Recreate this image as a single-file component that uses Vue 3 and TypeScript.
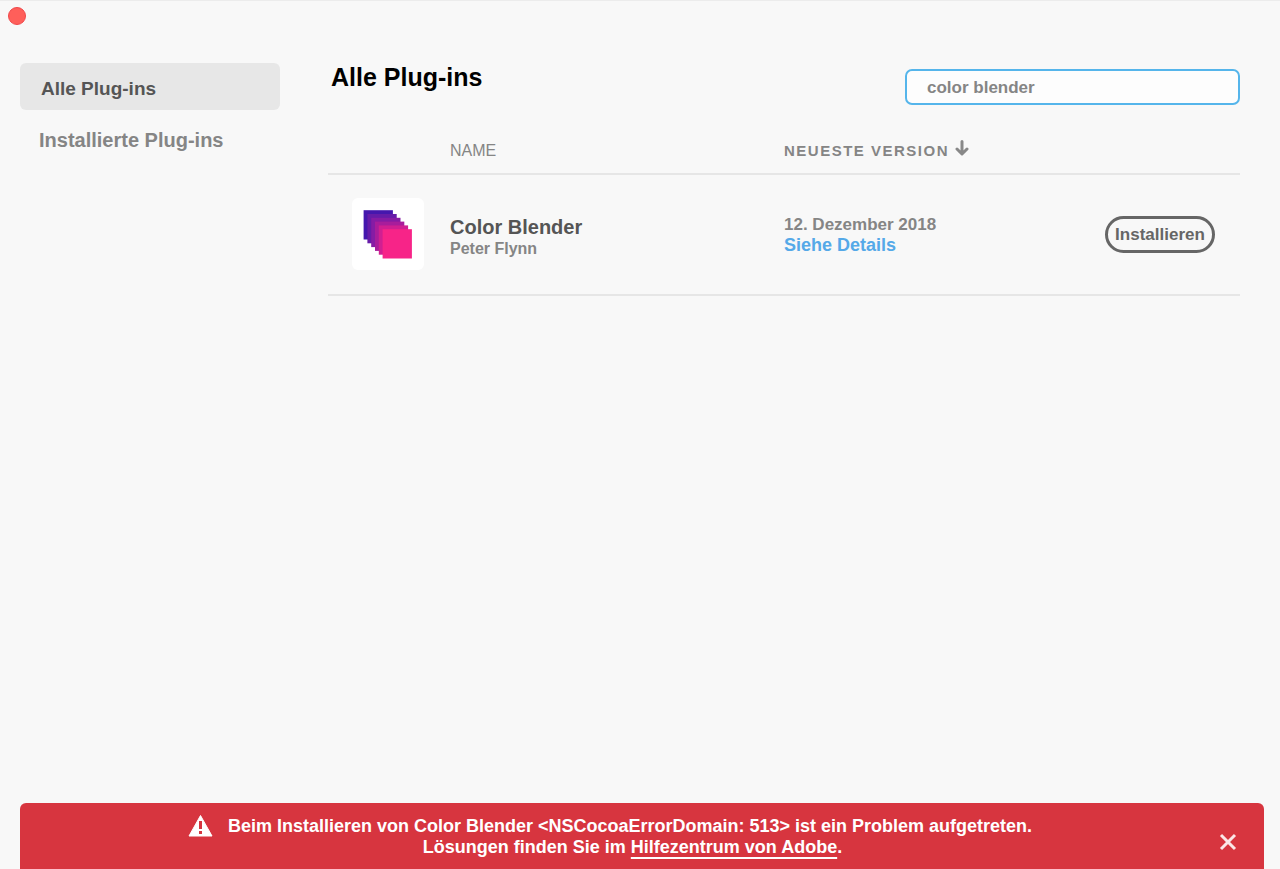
<script setup lang="ts">
import { ref } from 'vue'

interface Plugin {
  name: string
  author: string
  released: string
}

const query = ref('color blender')
const errorVisible = ref(true)
const plugins: Plugin[] = [
  { name: 'Color Blender', author: 'Peter Flynn', released: '12. Dezember 2018' },
]

const logoLayers = [
  { offset: 0, fill: '#4517ad' },
  { offset: 3.8, fill: '#661ca8' },
  { offset: 7.6, fill: '#861ca4' },
  { offset: 11.4, fill: '#a81d9b' },
  { offset: 15.2, fill: '#d01f92' },
  { offset: 19, fill: '#f72488' },
]
</script>

<template>
  <div class="window">
    <header class="titlebar">
      <button class="window-close" type="button" aria-label="Fenster schließen"></button>
    </header>

    <div class="content">
      <nav class="sidebar">
        <a class="nav-item active" href="#alle" aria-current="page">Alle Plug-ins</a>
        <a class="nav-item" href="#installiert">Installierte Plug-ins</a>
      </nav>

      <main class="main">
        <div class="toolbar">
          <h1>Alle Plug-ins</h1>
          <input v-model="query" class="search" type="text" aria-label="Plug-ins suchen" />
        </div>

        <table class="plugins">
          <colgroup>
            <col class="col-icon" />
            <col class="col-name" />
            <col />
            <col class="col-action" />
          </colgroup>
          <thead>
            <tr>
              <td></td>
              <th scope="col" class="head-name">NAME</th>
              <th scope="col" class="head-version" aria-sort="descending">
                <span class="sort">
                  NEUESTE VERSION
                  <svg width="14" height="17" viewBox="0 0 14 17" aria-hidden="true">
                    <path d="M7 1.5V13M2 9l5 5 5-5" fill="none" stroke="#888" stroke-width="3" stroke-linecap="round" stroke-linejoin="round" />
                  </svg>
                </span>
              </th>
              <td></td>
            </tr>
          </thead>
          <tbody>
            <tr v-for="plugin in plugins" :key="plugin.name">
              <td class="cell-icon">
                <svg class="logo" width="72" height="72" viewBox="0 0 72 72" aria-hidden="true">
                  <rect width="72" height="72" rx="6" fill="#fff" />
                  <rect v-for="layer in logoLayers" :key="layer.offset" :x="11.6 + layer.offset" :y="12.2 + layer.offset" width="29.3" height="29.3" :fill="layer.fill" />
                </svg>
              </td>
              <td class="cell-name">
                <div class="plugin-name">{{ plugin.name }}</div>
                <div class="plugin-author">{{ plugin.author }}</div>
              </td>
              <td>
                <div class="released">{{ plugin.released }}</div>
                <a class="details" href="#details">Siehe Details</a>
              </td>
              <td class="cell-action">
                <button class="install" type="button">Installieren</button>
              </td>
            </tr>
          </tbody>
        </table>
      </main>
    </div>

    <div v-if="errorVisible" class="banner" role="alert">
      <div class="message">
        <svg class="warning" width="25" height="23" viewBox="0 0 25 23" aria-hidden="true">
          <path d="M12.5 1.5 24 22H1z" fill="#fff" stroke="#fff" stroke-linejoin="round" />
          <path d="M12.5 7v8M12.5 17v3" stroke="#d7353f" stroke-width="3" />
        </svg>
        <p>
          Beim Installieren von Color Blender &lt;NSCocoaErrorDomain: 513&gt; ist ein Problem aufgetreten.
          <span class="hint">Lösungen finden Sie im <a href="#hilfe">Hilfezentrum von Adobe</a>.</span>
        </p>
      </div>
      <button class="dismiss" type="button" aria-label="Meldung schließen" @click="errorVisible = false">
        <svg width="18" height="18" viewBox="0 0 18 18" aria-hidden="true">
          <path d="M2 2l14 14M16 2 2 16" stroke="#fbe6e7" stroke-width="3" />
        </svg>
      </button>
    </div>
  </div>
</template>

<style>
body {
  margin: 0;
  background: #f8f8f8;
}
</style>

<style scoped>
.window {
  box-sizing: border-box;
  display: flex;
  flex-direction: column;
  min-height: 100vh;
  border-top: 1px solid #ececec;
  background: #f8f8f8;
  color: #858585;
  font-family: "Liberation Sans", Arial, sans-serif;
  font-weight: 700;
}

button {
  padding: 0;
  border: 0;
  background: none;
  font: inherit;
  cursor: pointer;
}

a {
  color: inherit;
  text-decoration: none;
}

.titlebar {
  display: flex;
  height: 48px;
  padding: 6px 8px 8px;
}

.window-close {
  width: 18px;
  height: 18px;
  border: 1px solid #f0484a;
  border-radius: 50%;
  background: #ff5f5a;
}

.content {
  display: flex;
  flex: 1;
  gap: 48px;
  padding: 0 40px 0 20px;
}

.sidebar {
  display: flex;
  flex: 0 0 260px;
  flex-direction: column;
  gap: 4px;
}

.nav-item {
  box-sizing: border-box;
  height: 47px;
  padding: 4px 19px 0;
  border-radius: 6px;
  font-size: 20px;
  line-height: 44px;
}

.nav-item.active {
  padding-left: 21px;
  background: #e7e7e7;
  color: #555;
  font-size: 19px;
}

.main {
  flex: 1;
  min-width: 0;
}

.toolbar {
  display: flex;
  align-items: flex-start;
  justify-content: space-between;
  padding-left: 3px;
}

h1 {
  margin: 0;
  color: #000;
  font-size: 25px;
  line-height: 28px;
}

.search {
  box-sizing: border-box;
  width: 335px;
  height: 36px;
  margin-top: 6px;
  padding: 1px 20px 0;
  border: 2px solid #55b5eb;
  border-radius: 7px;
  outline: 0;
  background: #fdfdfd;
  color: #858585;
  font: inherit;
  font-size: 17px;
}

.plugins {
  width: 100%;
  margin-top: 23px;
  border-collapse: separate;
  border-spacing: 0;
  table-layout: fixed;
}

.col-icon {
  width: 122px;
}

.col-name {
  width: 334px;
}

.col-action {
  width: 135px;
}

td,
th {
  padding: 0;
  border-bottom: 2px solid #e6e6e6;
  text-align: left;
}

thead th,
thead td {
  height: 45px;
}

.head-name {
  font-size: 16px;
  font-weight: 400;
}

.head-version {
  font-size: 15px;
  letter-spacing: 0.1em;
}

.sort {
  display: flex;
  align-items: center;
  gap: 6px;
}

.sort svg {
  margin-bottom: 4px;
}

tbody td {
  height: 119px;
}

tbody .cell-icon {
  height: 118px;
  padding-bottom: 1px;
}

tbody .cell-name {
  height: 115px;
  padding-top: 4px;
}

.logo {
  display: block;
  margin-left: 24px;
}

.plugin-name {
  color: #555;
  font-size: 20px;
  line-height: 24px;
}

.plugin-author {
  font-size: 16px;
  line-height: 20px;
}

.released {
  font-size: 17px;
  line-height: 20px;
}

.details {
  display: block;
  color: #55a9e8;
  font-size: 18px;
  line-height: 20px;
}

.install {
  display: block;
  box-sizing: border-box;
  width: 110px;
  height: 37px;
  border: 3px solid #666;
  border-radius: 19px;
  color: #666;
  font-size: 17px;
}

.banner {
  display: flex;
  align-items: center;
  gap: 12px;
  margin: 0 16px 0 20px;
  padding: 11px 20px 11px 0;
  border-radius: 6px 6px 0 0;
  background: #d7353f;
  color: #fff;
}

.message {
  display: flex;
  flex: 1;
  align-items: flex-start;
  justify-content: center;
  gap: 15px;
}

.message p {
  margin: 0;
  padding-top: 2px;
  font-size: 18px;
  line-height: 21px;
  text-align: center;
}

.hint {
  display: block;
  padding-left: 5px;
}

.message a {
  text-decoration: underline;
  text-decoration-thickness: 2px;
  text-underline-offset: 4px;
  text-decoration-skip-ink: none;
}

.dismiss {
  display: flex;
  align-items: center;
  justify-content: center;
  width: 32px;
  height: 32px;
  margin-top: 11px;
}
</style>
